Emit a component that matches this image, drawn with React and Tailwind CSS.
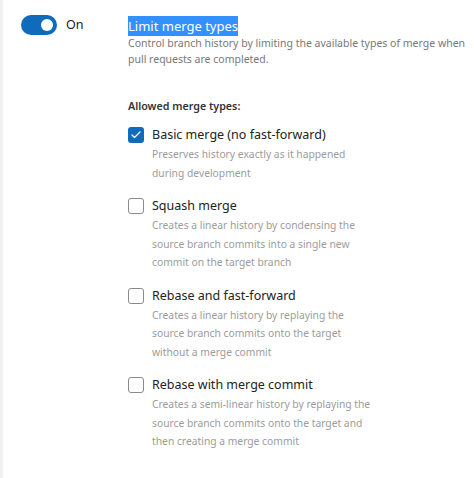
import { Check } from 'lucide-react';

const mergeTypes = [
  {
    label: 'Basic merge (no fast-forward)',
    checked: true,
    desc: ['Preserves history exactly as it happened', 'during development'],
  },
  {
    label: 'Squash merge',
    checked: false,
    desc: [
      'Creates a linear history by condensing the',
      'source branch commits into a single new',
      'commit on the target branch',
    ],
  },
  {
    label: 'Rebase and fast-forward',
    checked: false,
    desc: [
      'Creates a linear history by replaying the',
      'source branch commits onto the target',
      'without a merge commit',
    ],
  },
  {
    label: 'Rebase with merge commit',
    checked: false,
    desc: [
      'Creates a semi-linear history by replaying the',
      'source branch commits onto the target and',
      'then creating a merge commit',
    ],
  },
];

function MergeOption({ item }) {
  return (
    <div className="flex gap-2 mb-[14px]">
      <div className="pt-[2px] shrink-0">
        {item.checked ? (
          <div className="w-4 h-4 rounded-[3px] bg-[#0f6cbd] flex items-center justify-center">
            <Check className="w-3 h-3 text-white" strokeWidth={2.5} />
          </div>
        ) : (
          <div className="w-4 h-4 rounded-[3px] border border-[#8a8a8a] bg-white" />
        )}
      </div>
      <div>
        <div className="text-[12.5px] leading-[20px] text-[#222]">{item.label}</div>
        <div className="text-[10.3px] leading-[18.5px] text-[#9c9c9c]">
          {item.desc.map((line) => (
            <div key={line}>{line}</div>
          ))}
        </div>
      </div>
    </div>
  );
}

export default function App() {
  return (
    <div
      className="w-[474px] h-[478px] bg-white border-l-[3px] border-[#f1f1f1] flex"
      style={{ fontFamily: '"Segoe UI", "Noto Sans", sans-serif' }}
    >
      {/* Toggle */}
      <div className="w-[125px] shrink-0 pl-[18px] pt-[15px] flex items-start gap-[9px]">
        <div className="w-9 h-5 rounded-full bg-[#0f6cbd] flex items-center justify-end pr-1">
          <div className="w-3 h-3 rounded-full bg-white" />
        </div>
        <span className="text-[12.5px] leading-5 text-[#222]">On</span>
      </div>

      {/* Settings */}
      <div className="pt-[15px]">
        <div className="h-5 leading-5">
          <span className="text-[13px] bg-[#3390ff] text-white py-[1px]">Limit merge types</span>
        </div>
        <div className="text-[10.5px] leading-4 text-[#787878]">
          <div>Control branch history by limiting the available types of merge when</div>
          <div>pull requests are completed.</div>
        </div>

        <div className="mt-[31px] text-[10.7px] leading-4 font-semibold text-[#333]">
          Allowed merge types:
        </div>

        <div className="mt-[11px]">
          {mergeTypes.map((item) => (
            <MergeOption key={item.label} item={item} />
          ))}
        </div>
      </div>
    </div>
  );
}
